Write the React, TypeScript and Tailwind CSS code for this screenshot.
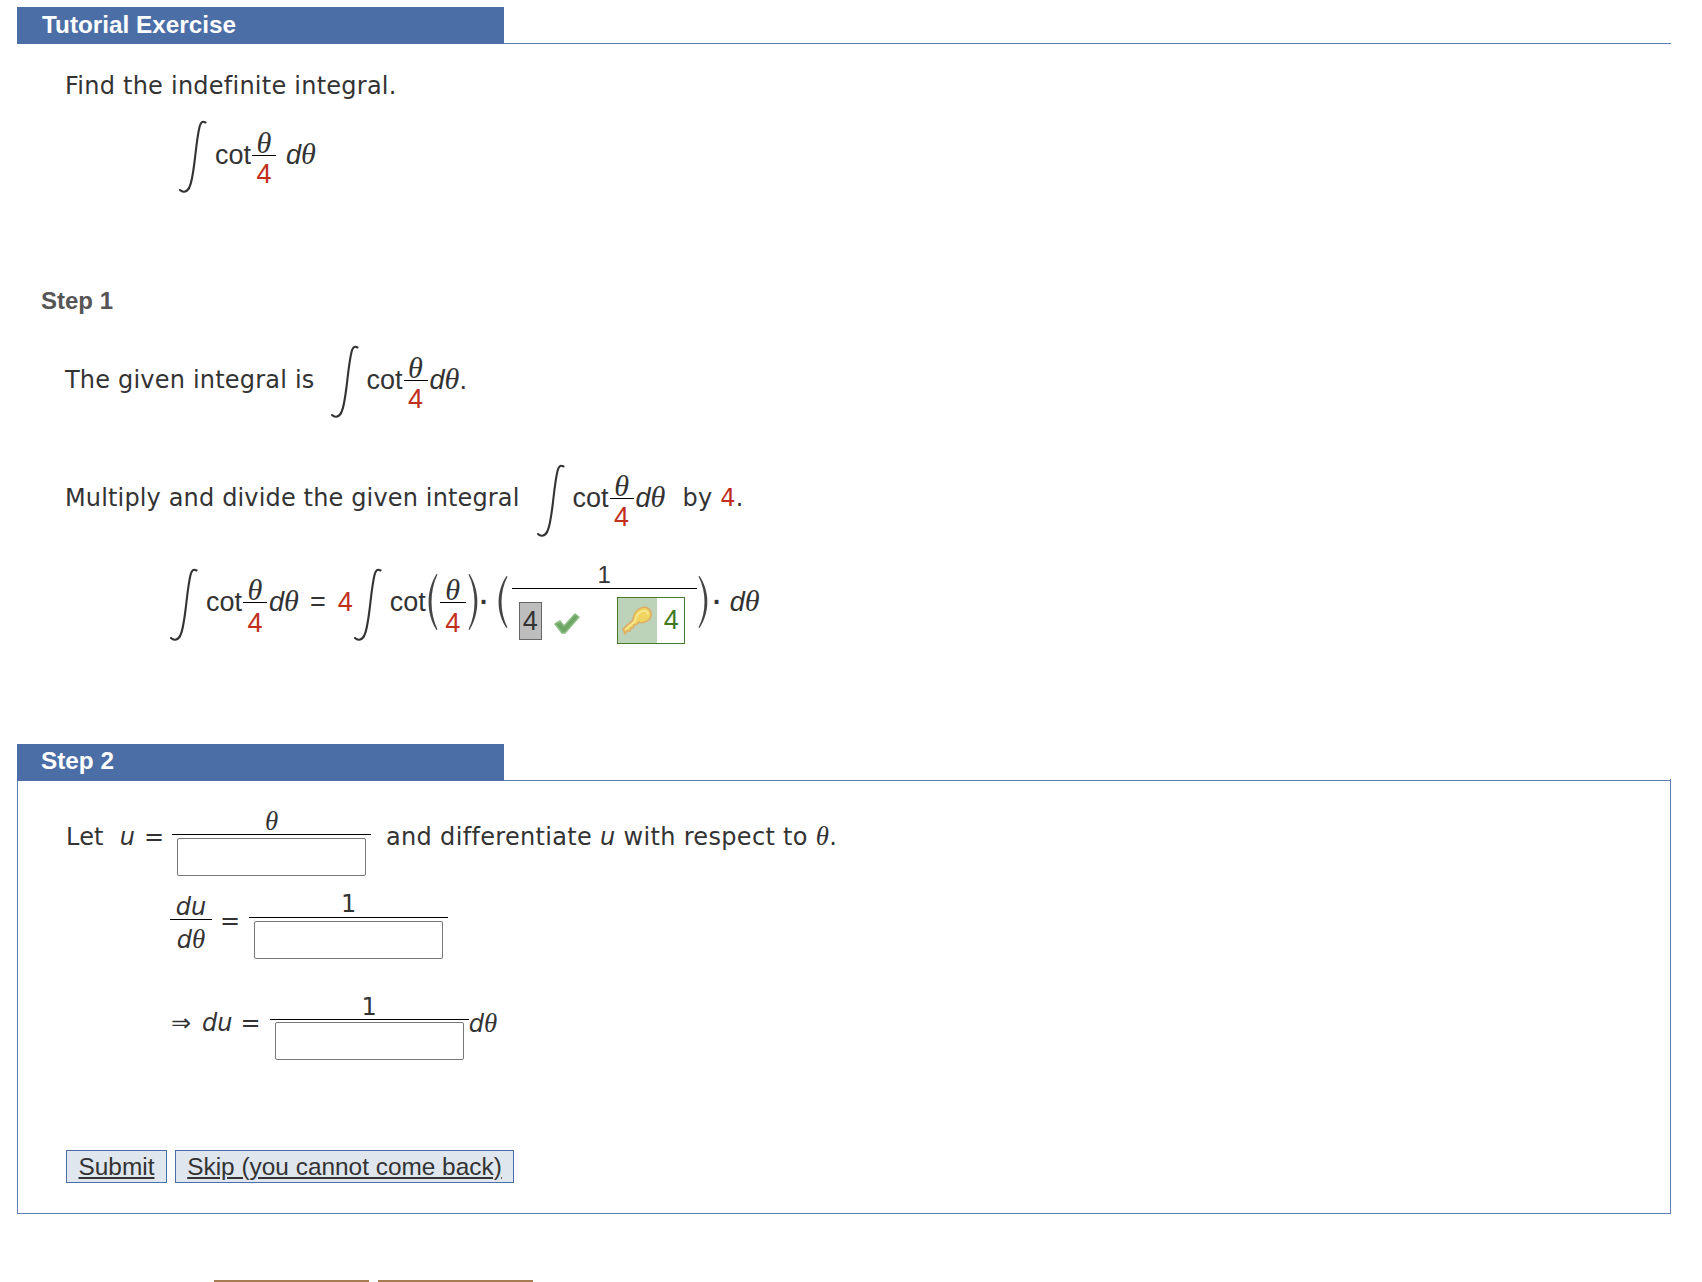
import React from 'react';

const Integral = ({ className = '' }: { className?: string }) => (
  <svg width="29" height="74" viewBox="0 0 29 74" className={`shrink-0 ${className}`}>
    <path d="M27.5 2.5 C24 0.5 22.5 3 21.5 7 C19 18 18 30 16.5 42 C15 54 14 62 11.5 67 C9.5 72 5 73 2 70" fill="none" stroke="#333" strokeWidth="2.1" strokeLinecap="round" />
  </svg>
);

const Paren = ({ h, flip = false }: { h: number; flip?: boolean }) => (
  <svg width="12" height={h} viewBox={`0 0 12 ${h}`} className={`shrink-0 ${flip ? '-scale-x-100' : ''}`}>
    <path d={`M10.5 0 C0 ${h * 0.3} 0 ${h * 0.7} 10.5 ${h} L11.5 ${h - 0.5} C3.5 ${h * 0.7} 3.5 ${h * 0.3} 11.5 0.5 Z`} fill="#444" />
  </svg>
);

const Th = () => <i className="font-['Liberation_Serif',serif] text-[1.12em]">θ</i>;
const DTh = () => (
  <span className="italic whitespace-nowrap">
    d<Th />
  </span>
);

// small theta over a red 4
const Frac = ({ className = '', low = false }: { className?: string; low?: boolean }) => (
  <span className={`flex flex-col items-center shrink-0 ${className}`}>
    <span className="h-[30px] leading-[36px] text-[#333]"><Th /></span>
    <span className="w-full border-t border-black"></span>
    <span className={`h-[30px] text-[#c1301c] ${low ? 'leading-[40px]' : 'leading-[36px]'}`}>4</span>
  </span>
);

const AnswerFrac = ({ top, className = '', tight = false }: { top: React.ReactNode; className?: string; tight?: boolean }) => (
  <span className={`flex flex-col items-center w-[199px] shrink-0 ${className}`}>
    <span className={`leading-[40px] ${tight ? 'h-[32px]' : 'h-[33px]'}`}>{top}</span>
    <span className="w-full border-t border-black"></span>
    <input type="text" className={`w-[189px] h-[38px] bg-white border border-[#777] rounded-[2px] ${tight ? 'mt-[2px]' : 'mt-[3px]'}`} />
  </span>
);

const KeyIcon = () => (
  <svg width="32" height="34" viewBox="0 0 32 34" className="shrink-0">
    <path d="M2 25 L12 16 C12 11 15 6 20 4 C24 2 29 4 30 9 C31 13 28 17 24 18 C21 19 19 19 18 18 L15 21 L13 21 L12 24 L10 24 L9 27 L6 27 L4 30 Z" fill="#efd55f" stroke="#dcae6a" strokeWidth="1.7" strokeLinejoin="round" />
    <path d="M5 25 L14 17 C15 12 18 8 22 7 C25 6 27 8 27 10" fill="none" stroke="#f9eb95" strokeWidth="1.6" strokeLinecap="round" />
  </svg>
);

const CheckIcon = () => (
  <svg width="29" height="24" viewBox="0 0 29 24" className="shrink-0">
    <path d="M3 13 L8 10 L12 15 L23 3 L27 6 L13 22 L10 22 Z" fill="#6fa866" stroke="#8cbc83" strokeWidth="1.5" strokeLinejoin="round" />
  </svg>
);

const SectionHeader = ({ title, className }: { title: string; className: string }) => (
  <div className="flex ml-[17px] w-[1654px]">
    <div className={`w-[487px] h-[37px] bg-[#4c6ea7] text-white font-bold text-[24.3px] font-['Liberation_Sans',sans-serif] ${className}`}>{title}</div>
    <div className="flex-1 border-b-[1.5px] border-[#5f7fb3]"></div>
  </div>
);

export default function App() {
  return (
    <div className="relative h-[1282px] overflow-hidden bg-white pt-[7px] text-[#333] text-[24px] font-['DejaVu_Sans',sans-serif]">
      <SectionHeader title="Tutorial Exercise" className="pl-[25px] leading-[36px]" />

      <p className="ml-[65px] mt-[27px] leading-[30px] tracking-[0.24px]">Find the indefinite integral.</p>

      <div className="flex items-center h-[74px] ml-[178px] mt-[17px] text-[27px] font-['Liberation_Sans',sans-serif]">
        <Integral className="mt-[4px]" />
        <span className="ml-[8px]">cot</span>
        <Frac className="ml-[1px] w-[24px]" />
        <span className="ml-[10px]"><DTh /></span>
      </div>

      <div className="ml-[41px] mt-[94px] leading-[30px] font-bold text-[#555] font-['Liberation_Sans',sans-serif]">Step 1</div>

      <div className="flex items-center h-[74px] ml-[65px] mt-[27px]">
        <span className="tracking-[0.2px]">The given integral is</span>
        <Integral className="ml-[15px] mt-[4px]" />
        <span className="flex items-center text-[27px] font-['Liberation_Sans',sans-serif]">
          <span className="ml-[8px]">cot</span>
          <Frac className="ml-[1px] w-[24px]" />
          <span className="ml-[2px]"><DTh /></span>
          <span>.</span>
        </span>
      </div>

      <div className="flex items-center h-[74px] ml-[65px] mt-[44px]">
        <span className="tracking-[0.15px]">Multiply and divide the given integral</span>
        <Integral className="ml-[16px] mt-[6px]" />
        <span className="flex items-center text-[27px] font-['Liberation_Sans',sans-serif]">
          <span className="ml-[8px]">cot</span>
          <Frac className="ml-[1px] w-[24px]" />
          <span className="ml-[2px]"><DTh /></span>
        </span>
        <span className="ml-[17px] tracking-[0.2px]">by <span className="text-[#c1301c]">4</span>.</span>
      </div>

      <div className="flex items-center h-[74px] ml-[169px] mt-[30px] text-[27px] font-['Liberation_Sans',sans-serif]">
        <Integral className="mt-[6px]" />
        <span className="ml-[8px]">cot</span>
        <Frac low className="ml-[1px] w-[24px]" />
        <span className="ml-[2px]"><DTh /></span>
        <span className="ml-[11px]">=</span>
        <span className="ml-[12px] text-[#c1301c]">4</span>
        <Integral className="mt-[6px]" />
        <span className="ml-[8px]">cot</span>
        <Paren h={56} />
        <Frac low className="ml-[2px] w-[26px]" />
        <span className="ml-[2px]"><Paren h={56} flip /></span>
        <span className="font-bold">·</span>
        <span className="ml-[7px]"><Paren h={52} /></span>
        <span className="flex flex-col shrink-0 ml-[4px] w-[185px] h-[87px] mt-[2px] text-[24px]">
          <span className="h-[28px] shrink-0 leading-[30px] text-center">1</span>
          <span className="shrink-0 border-t border-black"></span>
          <span className="flex items-center shrink-0 h-[56px] mt-[4px]">
            <span className="ml-[7px] w-[23px] h-[38px] bg-[#bdbdbd] border border-[#666] text-center text-[27px] leading-[36px]">4</span>
            <span className="ml-[10px] mt-[5px]"><CheckIcon /></span>
            <span className="flex ml-[36px] w-[68px] h-[47px] border border-[#4a7a2e]">
              <span className="flex items-center justify-center w-[39px] bg-[#bdd3b9]"><KeyIcon /></span>
              <span className="flex-1 pl-[2px] text-center text-[27px] leading-[44px] text-[#3f7a22]">4</span>
            </span>
          </span>
        </span>
        <span className="ml-[1px]"><Paren h={52} flip /></span>
        <span className="ml-[3px] font-bold">·</span>
        <span className="ml-[8px]"><DTh /></span>
      </div>

      <div className="mt-[105px]">
        <SectionHeader title="Step 2" className="pl-[24px] leading-[34px]" />
      </div>

      <div className="ml-[17px] w-[1654px] h-[435px] -mt-[2px] border border-[#5f7fb3] border-t-0 pl-[48px] pt-[22px]">
        <div className="flex items-start h-[92px]">
          <span className="mt-[18px] tracking-[0.2px]">Let</span>
          <span className="ml-[16px] mt-[18px] italic">u</span>
          <span className="ml-[9px] mt-[18px]">=</span>
          <AnswerFrac top={<Th />} className="ml-[8px]" />
          <span className="ml-[15px] mt-[15px] whitespace-nowrap tracking-[0.32px]">and differentiate <i>u</i> with respect to <Th />.</span>
        </div>
        <div className="flex items-start ml-[104px] h-[92px] -mt-[9px]">
          <span className="flex flex-col items-center w-[42px] -mt-[1px]">
            <span className="italic h-[36px] leading-[48px]">du</span>
            <span className="w-full border-t border-black"></span>
            <span className="h-[36px] leading-[38px]"><DTh /></span>
          </span>
          <span className="ml-[8px] mt-[19px]">=</span>
          <AnswerFrac top="1" className="ml-[9px]" />
        </div>
        <div className="flex items-start ml-[105px] mt-[11px]">
          <span className="mt-[18px]">⇒</span>
          <span className="ml-[11px] mt-[18px] italic">du</span>
          <span className="ml-[8px] mt-[18px]">=</span>
          <AnswerFrac tight top="1" className="ml-[9px]" />
          <span className="mt-[16px]"><DTh /></span>
        </div>
        <div className="flex gap-[8px] mt-[90px] text-[24.4px] font-['Liberation_Sans',sans-serif]">
          <button className="w-[101px] h-[33px] bg-[#dfe6ee] border border-[#4c6ea7] underline leading-[30px]">Submit</button>
          <button className="w-[339px] h-[33px] bg-[#dfe6ee] border border-[#4c6ea7] underline leading-[30px]">Skip (you cannot come back)</button>
        </div>
      </div>

      <div className="absolute left-[214px] bottom-0 w-[155px] h-[2px] bg-[#a67c52]"></div>
      <div className="absolute left-[378px] bottom-0 w-[155px] h-[2px] bg-[#a67c52]"></div>
    </div>
  );
}
